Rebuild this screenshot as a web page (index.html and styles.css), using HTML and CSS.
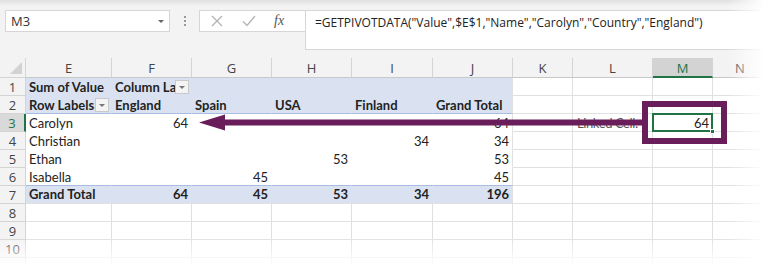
FILE: index.html
```html
<!DOCTYPE html>
<html lang="en">
<head>
    <meta charset="UTF-8">
    <title>GETPIVOTDATA linked cell</title>
    <link rel="stylesheet" href="styles.css">
</head>
<body>
<div class="window">
    <div class="toolbar">
        <div class="namebox"><span>M3</span><span class="caret"></span></div>
        <div class="grip"><i></i><i></i><i></i></div>
        <div class="fxbtns">
            <svg class="ico" width="14" height="14" viewBox="0 0 14 14"><path d="M2 2L12 12M12 2L2 12" stroke="#b5b5b5" stroke-width="1.4" fill="none"/></svg>
            <svg class="ico" width="16" height="14" viewBox="0 0 16 14"><path d="M2 7.5L6 11.5L14 2" stroke="#b5b5b5" stroke-width="1.4" fill="none"/></svg>
            <span class="fx">fx</span>
        </div>
        <div class="formula">=GETPIVOTDATA("Value",$E$1,"Name","Carolyn","Country","England")</div>
    </div>

    <div class="sheet">
        <!-- column headers -->
        <div class="corner"><span class="tri"></span></div>
        <div class="ch">E</div><div class="ch">F</div><div class="ch">G</div><div class="ch">H</div><div class="ch">I</div><div class="ch">J</div><div class="ch">K</div><div class="ch">L</div><div class="ch active">M</div><div class="ch">N</div>

        <!-- row 1 -->
        <div class="rh">1</div>
        <div class="c pv b">Sum of Value</div>
        <div class="c pv b drop"><span class="txt">Column Labels</span><span class="dd"></span></div>
        <div class="c pv"></div><div class="c pv"></div><div class="c pv"></div><div class="c pv edge"></div>
        <div class="c"></div><div class="c"></div><div class="c"></div><div class="c"></div>

        <!-- row 2 -->
        <div class="rh">2</div>
        <div class="c pv lab b drop"><span class="txt">Row Labels</span><span class="dd"></span></div>
        <div class="c pv lab b">England</div>
        <div class="c pv lab b">Spain</div>
        <div class="c pv lab b">USA</div>
        <div class="c pv lab b">Finland</div>
        <div class="c pv lab b edge">Grand Total</div>
        <div class="c"></div><div class="c"></div><div class="c"></div><div class="c"></div>

        <!-- row 3 -->
        <div class="rh active">3</div>
        <div class="c pd">Carolyn</div>
        <div class="c pd num">64</div>
        <div class="c pd"></div><div class="c pd"></div><div class="c pd"></div>
        <div class="c pd num edge">64</div>
        <div class="c"></div>
        <div class="c note">Linked Cell:</div>
        <div class="c num sel">64</div>
        <div class="c"></div>

        <!-- row 4 -->
        <div class="rh">4</div>
        <div class="c pd">Christian</div>
        <div class="c pd"></div><div class="c pd"></div><div class="c pd"></div>
        <div class="c pd num">34</div>
        <div class="c pd num edge">34</div>
        <div class="c"></div><div class="c"></div><div class="c"></div><div class="c"></div>

        <!-- row 5 -->
        <div class="rh">5</div>
        <div class="c pd">Ethan</div>
        <div class="c pd"></div><div class="c pd"></div>
        <div class="c pd num">53</div>
        <div class="c pd"></div>
        <div class="c pd num edge">53</div>
        <div class="c"></div><div class="c"></div><div class="c"></div><div class="c"></div>

        <!-- row 6 -->
        <div class="rh">6</div>
        <div class="c pd">Isabella</div>
        <div class="c pd"></div>
        <div class="c pd num">45</div>
        <div class="c pd"></div><div class="c pd"></div>
        <div class="c pd num edge">45</div>
        <div class="c"></div><div class="c"></div><div class="c"></div><div class="c"></div>

        <!-- row 7 -->
        <div class="rh">7</div>
        <div class="c gt b">Grand Total</div>
        <div class="c gt b num">64</div>
        <div class="c gt b num">45</div>
        <div class="c gt b num">53</div>
        <div class="c gt b num">34</div>
        <div class="c gt b num edge">196</div>
        <div class="c"></div><div class="c"></div><div class="c"></div><div class="c"></div>

        <!-- rows 8-10 -->
        <div class="rh">8</div>
        <div class="c"></div><div class="c"></div><div class="c"></div><div class="c"></div><div class="c"></div><div class="c"></div><div class="c"></div><div class="c"></div><div class="c"></div><div class="c"></div>
        <div class="rh">9</div>
        <div class="c"></div><div class="c"></div><div class="c"></div><div class="c"></div><div class="c"></div><div class="c"></div><div class="c"></div><div class="c"></div><div class="c"></div><div class="c"></div>
        <div class="rh">10</div>
        <div class="c"></div><div class="c"></div><div class="c"></div><div class="c"></div><div class="c"></div><div class="c"></div><div class="c"></div><div class="c"></div><div class="c"></div><div class="c"></div>
        <div class="rh"></div>
        <div class="c"></div><div class="c"></div><div class="c"></div><div class="c"></div><div class="c"></div><div class="c"></div><div class="c"></div><div class="c"></div><div class="c"></div><div class="c"></div>
    </div>

    <!-- annotation: arrow from the linked cell back to the pivot value -->
    <svg class="annot" width="768" height="271" viewBox="0 0 768 271">
        <rect x="645" y="104" width="79" height="37" fill="none" stroke="#6a1d5b" stroke-width="6"/>
        <line x1="220" y1="122.5" x2="645" y2="122.5" stroke="#6a1d5b" stroke-width="6"/>
        <polygon points="199,122.5 225,114.5 225,130.5" fill="#6a1d5b"/>
    </svg>

    <div class="fade-top"></div>
    <div class="fade-right"></div>
    <div class="fade-bottom"></div>
</div>
</body>
</html>
```

FILE: styles.css
```css
body {
    margin: 0;
    background: #ffffff;
    font-family: Lato, "Liberation Sans", sans-serif;
}
.window {
    position: relative;
    width: 768px;
    height: 271px;
    overflow: hidden;
    background: #ffffff;
}

/* formula bar */
.toolbar {
    display: flex;
    align-items: flex-start;
    height: 58px;
    box-sizing: border-box;
    padding: 10px 0 0 5px;
    background: #f3f3f3;
}
.namebox {
    display: flex;
    align-items: center;
    justify-content: space-between;
    width: 165px;
    height: 22px;
    box-sizing: border-box;
    padding: 0 5px 0 5px;
    background: #fff;
    border: 1px solid #d6d6d6;
    font-family: "Open Sans", sans-serif;
    font-size: 13px;
    color: #333;
}
.caret {
    width: 0;
    height: 0;
    border-left: 3px solid transparent;
    border-right: 3px solid transparent;
    border-top: 3px solid #666;
}
.grip {
    display: flex;
    flex-direction: column;
    align-items: center;
    gap: 2px;
    width: 29px;
    padding-top: 6px;
}
.grip i {
    width: 2px;
    height: 2px;
    background: #9a9a9a;
}
.fxbtns {
    display: flex;
    align-items: center;
    gap: 17px;
    width: 106px;
    height: 22px;
    box-sizing: border-box;
    padding-left: 10px;
    background: #fff;
    border: 1px solid #d6d6d6;
    border-right: none;
}
.fx {
    font-family: "Liberation Serif", serif;
    font-style: italic;
    font-size: 14px;
    color: #555;
}
.formula {
    flex: 1;
    height: 40px;
    box-sizing: border-box;
    padding: 3px 0 0 9px;
    background: #fff;
    border: 1px solid #d6d6d6;
    border-right: none;
    font-family: "Open Sans", sans-serif;
    font-size: 12px;
    color: #222;
    white-space: nowrap;
}

/* grid */
.sheet {
    display: grid;
    grid-template-columns: 26px 86px 80px 80px 80px 81px 80px 60px 80px 60px 1fr;
    grid-template-rows: 20px;
    grid-auto-rows: 18px;
    font-size: 13px;
    color: #222;
}
.corner, .ch, .rh {
    box-sizing: border-box;
    background: #f3f3f3;
    border-right: 1px solid #d4d4d4;
    border-bottom: 1px solid #d4d4d4;
    color: #444;
    font-family: "Open Sans", sans-serif;
    font-size: 13px;
}
.corner {
    position: relative;
}
.tri {
    position: absolute;
    right: 3px;
    bottom: 3px;
    width: 0;
    height: 0;
    border-left: 12px solid transparent;
    border-bottom: 12px solid #d2d2d2;
}
.ch {
    text-align: center;
    line-height: 20px;
    border-bottom-color: #c8c8c8;
}
.ch.active {
    background: #d3d3d3;
    border-bottom: 2px solid #217346;
    color: #217346;
}
.rh {
    text-align: center;
    line-height: 18px;
}
.rh.active {
    background: #d9d9d9;
    border-right: 2px solid #217346;
    color: #217346;
}
.c {
    box-sizing: border-box;
    border-right: 1px solid #e0e0e0;
    border-bottom: 1px solid #e0e0e0;
    padding: 0 3px;
    line-height: 18px;
    white-space: nowrap;
    overflow: hidden;
}
.b {
    font-weight: bold;
}
.num {
    text-align: right;
}
.pv {
    background: #dae2f2;
    border-color: #dae2f2;
}
.pv.lab {
    border-bottom-color: #a8bde2;
}
.pd {
    border-color: #fff;
}
.gt {
    background: #dae2f2;
    border-right-color: #dae2f2;
    border-top: 1px solid #a8bde2;
    margin-top: -1px;
    line-height: 17px;
}
.edge {
    border-right-color: #e0e0e0;
}
.drop {
    display: flex;
    align-items: center;
    padding-right: 2px;
}
.drop .txt {
    flex: 1;
    overflow: hidden;
}
.dd {
    flex: none;
    position: relative;
    width: 14px;
    height: 14px;
    box-sizing: border-box;
    background: #f4f4f4;
    border: 1px solid #c9c9c9;
}
.dd::after {
    content: "";
    position: absolute;
    left: 3px;
    top: 5px;
    border-left: 3px solid transparent;
    border-right: 3px solid transparent;
    border-top: 3px solid #777;
}
.note {
    color: #555;
    padding-left: 4px;
    letter-spacing: -0.4px;
    overflow: visible;
}
.sel {
    position: relative;
    overflow: visible;
}
.sel::after {
    content: "";
    position: absolute;
    left: -1px;
    top: -1px;
    right: -1px;
    bottom: -1px;
    border: 2px solid #217346;
}
.sel::before {
    content: "";
    position: absolute;
    right: -3px;
    bottom: -3px;
    width: 5px;
    height: 5px;
    background: #217346;
    border: 1px solid #fff;
    box-sizing: border-box;
    z-index: 1;
}

/* annotation and soft edges */
.annot {
    position: absolute;
    left: 0;
    top: 0;
}
.fade-top {
    position: absolute;
    left: 0;
    top: 0;
    width: 768px;
    height: 6px;
    background: linear-gradient(to bottom, rgba(0,0,0,0.08), rgba(0,0,0,0));
}
.fade-right {
    position: absolute;
    right: 0;
    top: 0;
    width: 40px;
    height: 271px;
    background: linear-gradient(to right, rgba(255,255,255,0), #fff 90%);
}
.fade-bottom {
    position: absolute;
    left: 0;
    bottom: 0;
    width: 768px;
    height: 34px;
    background: linear-gradient(to bottom, rgba(255,255,255,0), #fff 85%);
}
```
